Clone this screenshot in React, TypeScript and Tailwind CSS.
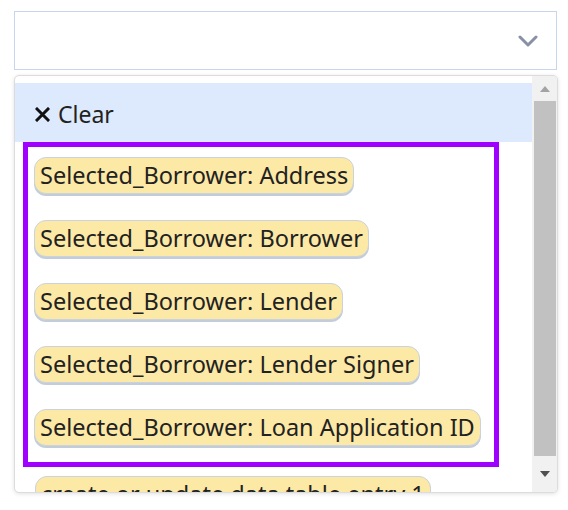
import React from "react";

const items = [
  "Selected_Borrower: Address",
  "Selected_Borrower: Borrower",
  "Selected_Borrower: Lender",
  "Selected_Borrower: Lender Signer",
  "Selected_Borrower: Loan Application ID",
];

function Chip({ text }: { text: string }) {
  return (
    <div className="inline-flex h-[37px] items-center rounded-[12px] border border-[#c9d2de] bg-[#fde9a6] px-[5px] text-[23.5px] leading-none text-[#222] shadow-[0_2px_0_#c3ccd9] whitespace-nowrap">
      {text}
    </div>
  );
}

export default function App() {
  return (
    <div
      className="w-[568px] h-[510px] bg-white pt-[11px] pl-[14px] overflow-hidden"
      style={{ fontFamily: '"Noto Sans", "Open Sans", sans-serif' }}
    >
      <div className="w-[543px] h-[59px] border border-[#c8d6ec] bg-white flex items-center justify-end pr-[18px]">
        <svg width="20" height="12" viewBox="0 0 20 12">
          <path d="M2 2 L10 10 L18 2" fill="none" stroke="#8790a4" strokeWidth="3" strokeLinecap="round" strokeLinejoin="round" />
        </svg>
      </div>
      <div className="mt-[5px] w-[544px] h-[418px] border border-[#dcdcdc] rounded-[5px] shadow-[0_1px_4px_rgba(0,0,0,0.12)] bg-white flex overflow-hidden">
        <div className="flex-1 pt-[7px] overflow-hidden">
          <div className="h-[59px] bg-[#dde9fc] flex items-center pl-[20px] pt-[3px] gap-[8px] text-[23px] text-[#222]">
            <svg width="15" height="15" viewBox="0 0 15 15">
              <path d="M2 2 L13 13 M13 2 L2 13" stroke="#111" strokeWidth="3" strokeLinecap="square" />
            </svg>
            <span>Clear</span>
          </div>
          <div className="ml-[8px] w-[476px] h-[325px] border-[5px] border-[#a000ff] pl-[6px] pt-[10px] flex flex-col items-start gap-[26px]">
            {items.map((t) => (
              <Chip key={t} text={t} />
            ))}
          </div>
          <div className="pl-[20px] pt-[9px]">
            <Chip text="create or update data table entry 1" />
          </div>
        </div>
        <div className="w-[25px] bg-[#f1f1f1] flex flex-col items-center">
          <div className="h-[25px] flex items-center justify-center">
            <svg width="10" height="6" viewBox="0 0 10 6">
              <path d="M0 6 L5 0 L10 6 Z" fill="#a3a3a3" />
            </svg>
          </div>
          <div className="w-[22px] h-[355px] bg-[#c1c1c1]" />
          <div className="flex-1 flex items-center justify-center">
            <svg width="10" height="6" viewBox="0 0 10 6">
              <path d="M0 0 L5 6 L10 0 Z" fill="#505050" />
            </svg>
          </div>
        </div>
      </div>
    </div>
  );
}
